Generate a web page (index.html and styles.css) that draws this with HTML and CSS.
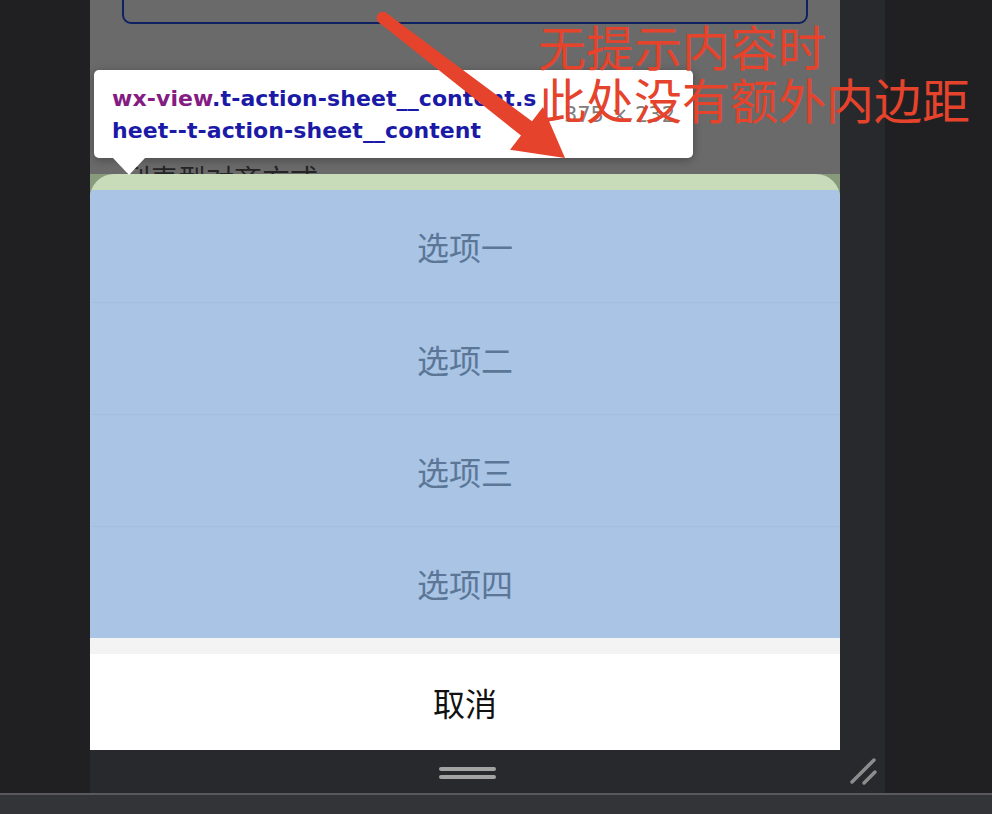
FILE: index.html
```html
<!DOCTYPE html>
<html lang="zh-CN">
<head>
<meta charset="utf-8">
<title>ActionSheet</title>
<link rel="stylesheet" href="styles.css">
</head>
<body>
<div class="app">
  <div class="workspace">
    <div class="gutter"></div>
    <div class="device">
      <div class="device-top">
        <div class="screen">
          <div class="page">
            <div class="btn-outline"></div>
            <div class="section-title">列表型对齐方式</div>
          </div>
          <div class="sheet">
            <div class="sheet-body">
              <div class="sheet-content">
                <div class="option">选项一</div>
                <div class="option">选项二</div>
                <div class="option">选项三</div>
                <div class="option">选项四</div>
              </div>
              <div class="sheet-gap"></div>
              <div class="sheet-cancel">取消</div>
            </div>
          </div>
          <div class="tooltip">
            <div class="tip-selector"><span class="tip-tag">wx-view</span><span class="tip-cls">.t-action-sheet__content.s<br>heet--t-action-sheet__content</span></div>
            <div class="tip-size">375 × 232</div>
          </div>
        </div>
      </div>
      <div class="device-bar">
        <div class="bar-center">
          <div class="handle"><span></span><span></span></div>
        </div>
        <div class="bar-corner">
          <svg class="resize" width="45" height="43" viewBox="0 0 45 43">
            <line x1="12" y1="32" x2="34" y2="10"/>
            <line x1="24" y1="33" x2="35" y2="22"/>
          </svg>
        </div>
      </div>
    </div>
  </div>
  <div class="statusbar"></div>
  <svg class="annot-arrow" width="210" height="165" viewBox="0 0 210 165">
    <circle cx="13" cy="13" r="6.2"/>
    <polygon points="16.7,8.2 162,116.3 173,102 195,153 140,144.8 151,130.5 9.3,17.8"/>
  </svg>
  <div class="annot-text">无提示内容时<br>此处没有额外内边距</div>
</div>
</body>
</html>
```

FILE: styles.css
```css
html, body {
  margin: 0;
  padding: 0;
}
body {
  width: 992px;
  height: 814px;
  overflow: hidden;
  background: #202022;
  font-family: "Noto Sans CJK SC", "Noto Sans", sans-serif;
}
.app {
  position: relative;
  width: 992px;
  height: 814px;
  display: flex;
  flex-direction: column;
}
.workspace {
  display: flex;
  height: 793px;
}
.gutter {
  width: 90px;
  background: #202022;
}
.device {
  width: 795px;
  display: flex;
  flex-direction: column;
  background: #28292d;
}
.device-top {
  display: flex;
  height: 750px;
}
.screen {
  position: relative;
  width: 750px;
  height: 750px;
  overflow: hidden;
  background: #6a6a6a;
}
.page {
  padding: 0 32px;
}
.btn-outline {
  margin-top: -50px;
  height: 70px;
  border: 2px solid #0d2163;
  border-radius: 9px;
}
.section-title {
  margin-top: 134px;
  font-size: 28px;
  line-height: 40px;
  color: #252525;
}
.sheet {
  position: absolute;
  left: 0;
  right: 0;
  bottom: 0;
  height: 576px;
  background: #879b7c;
}
.sheet-body {
  height: 100%;
  box-sizing: border-box;
  padding-top: 16px;
  background: #c9dcb9;
  border-radius: 24px 24px 0 0;
  overflow: hidden;
  display: flex;
  flex-direction: column;
}
.sheet-content {
  background: #a9c4e5;
}
.option {
  height: 112px;
  box-sizing: border-box;
  display: flex;
  align-items: center;
  justify-content: center;
  font-size: 32px;
  color: #5b7696;
}
.option + .option {
  border-top: 1px solid #a3bedf;
}
.sheet-gap {
  height: 16px;
  background: #f3f3f3;
}
.sheet-cancel {
  height: 96px;
  background: #ffffff;
  display: flex;
  align-items: center;
  justify-content: center;
  font-size: 32px;
  color: #111111;
}
.tooltip {
  position: absolute;
  left: 4px;
  top: 70px;
  width: 599px;
  height: 88px;
  box-sizing: border-box;
  padding: 0 18px;
  background: #ffffff;
  border-radius: 5px;
  box-shadow: 0 2px 10px rgba(0, 0, 0, 0.3);
  display: flex;
  align-items: center;
  justify-content: space-between;
}
.tooltip::after {
  content: "";
  position: absolute;
  left: 19px;
  bottom: -17px;
  border-left: 16.5px solid transparent;
  border-right: 16.5px solid transparent;
  border-top: 17px solid #ffffff;
}
.tip-selector {
  font-family: "DejaVu Sans", sans-serif;
  font-weight: bold;
  font-size: 22px;
  line-height: 32px;
  padding-top: 1px;
  letter-spacing: 0.1px;
}
.tip-tag {
  color: #841c83;
}
.tip-cls {
  color: #1a1aa6;
}
.tip-size {
  font-family: "DejaVu Sans", sans-serif;
  font-size: 21px;
  color: #7e7e7e;
  padding-top: 2px;
}
.device-bar {
  display: flex;
  height: 43px;
}
.bar-center {
  width: 750px;
  display: flex;
  justify-content: center;
  padding-left: 5px;
  box-sizing: border-box;
}
.handle {
  padding-top: 17px;
  display: flex;
  flex-direction: column;
  gap: 4px;
}
.handle span {
  display: block;
  width: 57px;
  height: 4px;
  border-radius: 2px;
  background: #a3a3a3;
}
.bar-corner {
  width: 45px;
}
.resize {
  display: block;
}
.resize line {
  stroke: #8c8c8c;
  stroke-width: 3.5;
  stroke-linecap: round;
}
.statusbar {
  height: 19px;
  border-top: 2px solid #59595d;
  background: #333438;
}
.annot-arrow {
  position: absolute;
  left: 370px;
  top: 5px;
  fill: #e5432b;
}
.annot-text {
  position: absolute;
  left: 538px;
  top: 19px;
  font-size: 48px;
  line-height: 53px;
  color: #e5432b;
  white-space: nowrap;
}
```
